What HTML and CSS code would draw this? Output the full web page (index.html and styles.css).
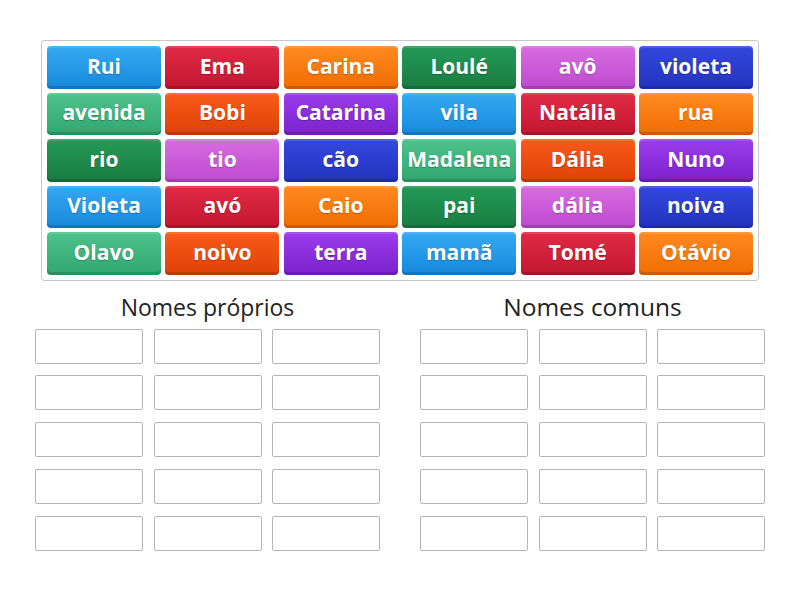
FILE: index.html
```html
<!DOCTYPE html>
<html>

<head>
    <meta name="viewport" content="width=device-width,initial-scale=1.0">
    <title>Nomes próprios e comuns</title>
    <link rel="stylesheet" href="styles.css">
</head>

<body>
    <div class="tiles">
        <div class="tile blue">Rui</div>
        <div class="tile red">Ema</div>
        <div class="tile orange">Carina</div>
        <div class="tile green">Loulé</div>
        <div class="tile orchid">avô</div>
        <div class="tile navy">violeta</div>

        <div class="tile mint">avenida</div>
        <div class="tile vermilion">Bobi</div>
        <div class="tile purple">Catarina</div>
        <div class="tile blue">vila</div>
        <div class="tile red">Natália</div>
        <div class="tile orange">rua</div>

        <div class="tile green">rio</div>
        <div class="tile orchid">tio</div>
        <div class="tile navy">cão</div>
        <div class="tile mint">Madalena</div>
        <div class="tile vermilion">Dália</div>
        <div class="tile purple">Nuno</div>

        <div class="tile blue">Violeta</div>
        <div class="tile red">avó</div>
        <div class="tile orange">Caio</div>
        <div class="tile green">pai</div>
        <div class="tile orchid">dália</div>
        <div class="tile navy">noiva</div>

        <div class="tile mint">Olavo</div>
        <div class="tile vermilion">noivo</div>
        <div class="tile purple">terra</div>
        <div class="tile blue">mamã</div>
        <div class="tile red">Tomé</div>
        <div class="tile orange">Otávio</div>
    </div>

    <div class="groups">
        <div class="group">
            <div class="group-title">Nomes próprios</div>
            <div class="slots">
                <div class="slot"></div><div class="slot"></div><div class="slot"></div>
                <div class="slot"></div><div class="slot"></div><div class="slot"></div>
                <div class="slot"></div><div class="slot"></div><div class="slot"></div>
                <div class="slot"></div><div class="slot"></div><div class="slot"></div>
                <div class="slot"></div><div class="slot"></div><div class="slot"></div>
            </div>
        </div>
        <div class="group">
            <div class="group-title wide">Nomes comuns</div>
            <div class="slots">
                <div class="slot"></div><div class="slot"></div><div class="slot"></div>
                <div class="slot"></div><div class="slot"></div><div class="slot"></div>
                <div class="slot"></div><div class="slot"></div><div class="slot"></div>
                <div class="slot"></div><div class="slot"></div><div class="slot"></div>
                <div class="slot"></div><div class="slot"></div><div class="slot"></div>
            </div>
        </div>
    </div>
</body>

</html>
```

FILE: styles.css
```css
body {
    margin: 0;
    padding: 0;
    font-family: "Open Sans", "Noto Sans", sans-serif;
    background: #fff;
}

.tiles {
    width: 718px;
    box-sizing: border-box;
    margin: 40px auto 0;
    padding: 5px;
    border: 1px solid #c8c8c8;
    border-radius: 3px;
    display: grid;
    grid-template-columns: repeat(6, 1fr);
    grid-auto-rows: 42.5px;
    column-gap: 4.4px;
    row-gap: 4px;
}

.tile {
    display: flex;
    align-items: center;
    justify-content: center;
    padding-bottom: 3px;
    box-sizing: border-box;
    border-radius: 4px;
    color: #fff;
    font-weight: bold;
    font-size: 21px;
    text-shadow: 0 1px 1px rgba(0, 0, 0, 0.25);
    background: linear-gradient(var(--top), var(--bottom));
    box-shadow: inset 0 -3px 0 rgba(0, 0, 0, 0.15), inset 0 2px 0 rgba(255, 255, 255, 0.12);
}

.blue { --top: #35a9f3; --bottom: #1788dc; }
.red { --top: #e02b46; --bottom: #c41631; }
.orange { --top: #ff8a20; --bottom: #f06c02; }
.green { --top: #249a56; --bottom: #1a7c41; }
.orchid { --top: #d86ce2; --bottom: #bd4acf; }
.navy { --top: #3448dd; --bottom: #2333c0; }
.mint { --top: #4dc38b; --bottom: #31a66e; }
.vermilion { --top: #fa5b1a; --bottom: #df4006; }
.purple { --top: #9b3ded; --bottom: #7b21cd; }

.groups {
    width: 730px;
    margin: 11px auto 0;
    display: flex;
    gap: 40px;
}

.group {
    flex: 1;
}

.group-title {
    text-align: center;
    font-size: 23px;
    line-height: 30px;
    color: #222;
    margin-bottom: 7px;
}

.group-title.wide {
    font-size: 24.5px;
}

.slots {
    display: grid;
    grid-template-columns: repeat(3, 1fr);
    grid-auto-rows: 35px;
    column-gap: 10.5px;
    row-gap: 11.75px;
}

.slot {
    border: 1px solid #b4b4b4;
    border-radius: 2px;
}
```
